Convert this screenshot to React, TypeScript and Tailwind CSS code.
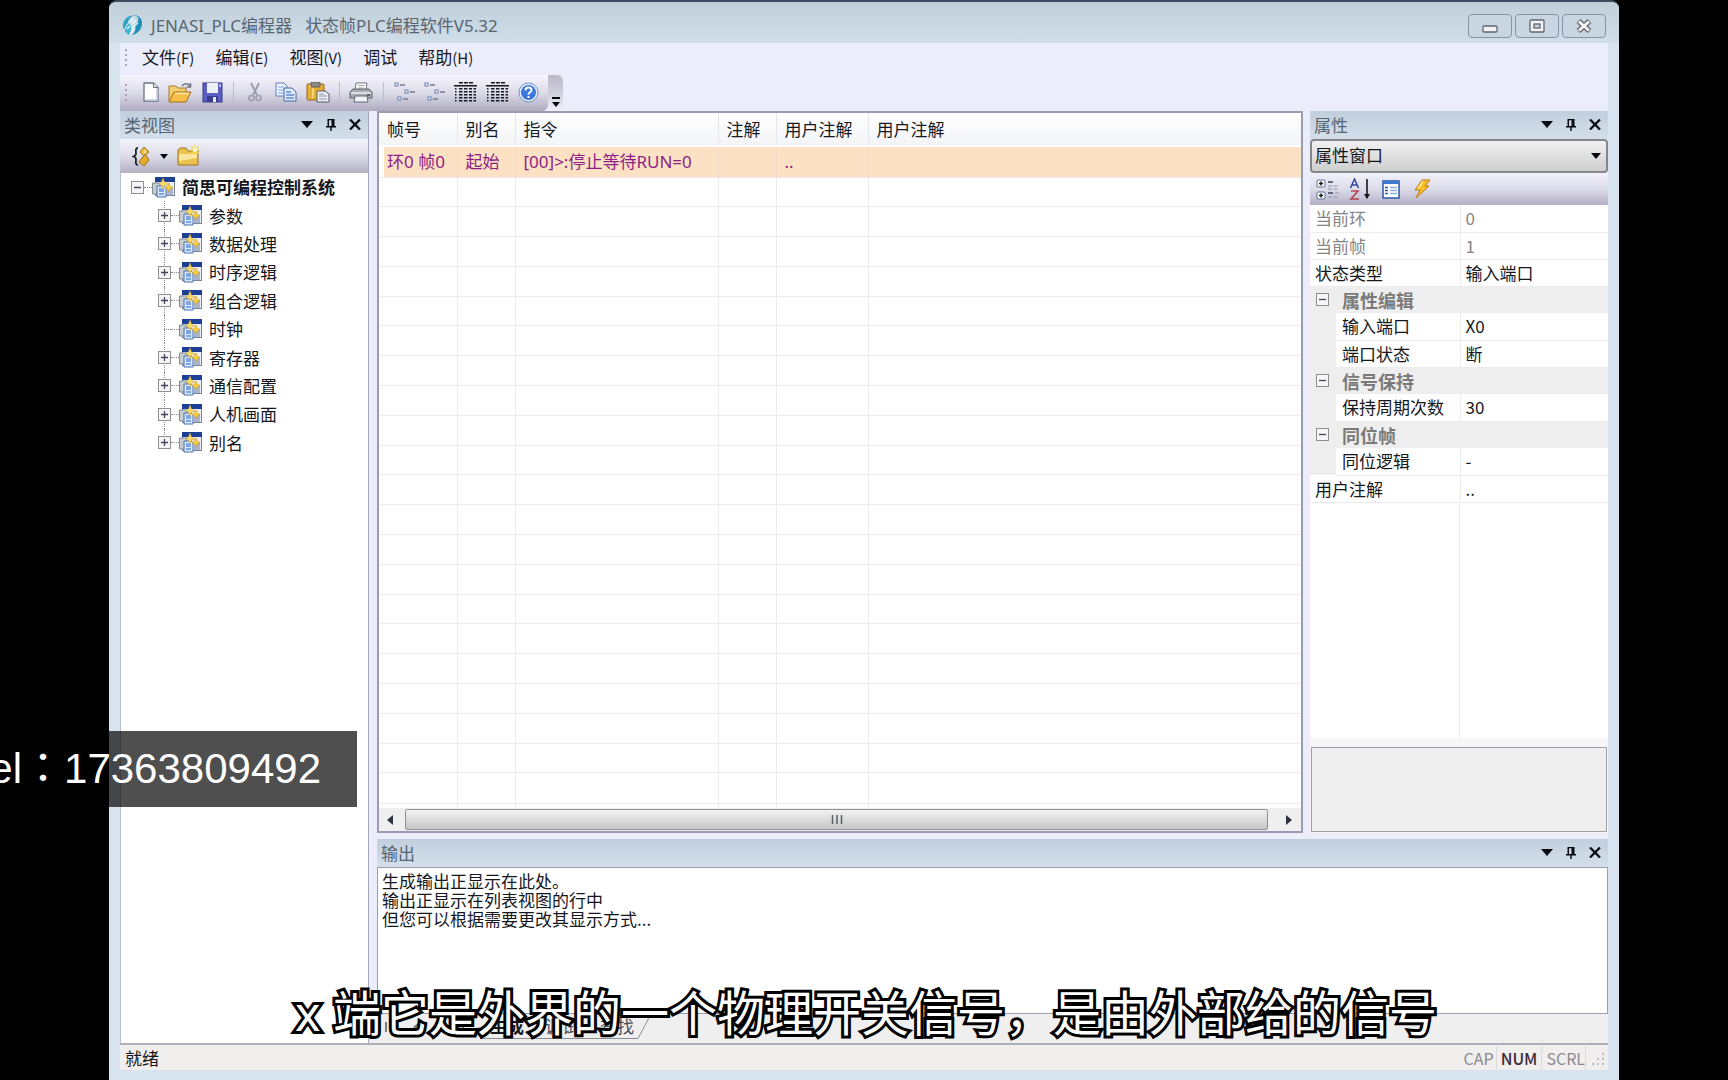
import React from "react";

const treeItems = [
  { label: "参数", expandable: true },
  { label: "数据处理", expandable: true },
  { label: "时序逻辑", expandable: true },
  { label: "组合逻辑", expandable: true },
  { label: "时钟", expandable: false },
  { label: "寄存器", expandable: true },
  { label: "通信配置", expandable: true },
  { label: "人机画面", expandable: true },
  { label: "别名", expandable: true },
];

type PropRow =
  | { kind: "group"; name: string }
  | { kind: "item" | "muted" | "child"; name: string; value: string };

const propRows: PropRow[] = [
  { kind: "muted", name: "当前环", value: "0" },
  { kind: "muted", name: "当前帧", value: "1" },
  { kind: "item", name: "状态类型", value: "输入端口" },
  { kind: "group", name: "属性编辑" },
  { kind: "child", name: "输入端口", value: "X0" },
  { kind: "child", name: "端口状态", value: "断" },
  { kind: "group", name: "信号保持" },
  { kind: "child", name: "保持周期次数", value: "30" },
  { kind: "group", name: "同位帧" },
  { kind: "child", name: "同位逻辑", value: "-" },
  { kind: "item", name: "用户注解", value: ".." },
];

const columns = ["帧号", "别名", "指令", "注解", "用户注解", "用户注解"];
const firstRow = ["环0 帧0", "起始", "[00]>:停止等待RUN=0", "", "..", ""];
const emptyRows = Array.from({ length: 21 }, (_, i) => i);

function Grip() {
  return (
    <svg width="4" height="18" viewBox="0 0 4 18" aria-hidden="true">
      {[1, 6, 11, 16].map((y) => (
        <rect key={y} x="1" y={y} width="2" height="2" fill="#a3a5ba" />
      ))}
    </svg>
  );
}

function AppLogo() {
  return (
    <svg width="22" height="22" viewBox="0 0 22 22" aria-hidden="true">
      <path d="M3 16C0 9 4 2 13 1C9 3 7 6 7 9C5 10 4 13 3 16Z" fill="#2aa5c8" />
      <path d="M13 1C18 1 21 5 21 9C21 15 17 20 11 21C15 17 15 14 14 11C17 9 18 6 17 3Z" fill="#238fb6" />
      <path d="M4 18C4 14 6 11 9 9C10 12 11 15 8 21Z" fill="#3fb4cf" />
      <path d="M8 9L13 4M10 11L15 6M12 13L17 9M6 15L9 12" stroke="#e9fbff" strokeWidth="1.400" />
      <path d="M9 20C12 18 13 15 12 12" fill="none" stroke="#e9fbff" strokeWidth="1.200" />
    </svg>
  );
}

function NewIcon() {
  return (
    <svg width="16" height="20" viewBox="0 0 16 20" aria-hidden="true">
      <path d="M1 1H10.500L15 5.500V19H1Z" fill="#fff" stroke="#6c7388" strokeWidth="1.300" />
      <path d="M10.500 1V5.500H15" fill="#dfe3ee" stroke="#6c7388" />
      <path d="M14 7V18H3" fill="none" stroke="#c9cede" strokeWidth="1.500" />
    </svg>
  );
}

function OpenIcon() {
  return (
    <svg width="25" height="21" viewBox="0 0 25 21" aria-hidden="true">
      <path d="M1 19V4H8L10 6H18V11" fill="#f3cf70" stroke="#a9792a" />
      <path d="M1 20L6 10H23L18 20Z" fill="#f7bf45" stroke="#a36f1d" />
      <path d="M7 11.500H21" stroke="#ffe9a6" strokeWidth="1.500" />
      <path d="M14 4C16 1 20 1 22 4M22.500 1V5H18.500" fill="none" stroke="#6f7480" strokeWidth="1.500" />
    </svg>
  );
}

function SaveIcon() {
  return (
    <svg width="21" height="21" viewBox="0 0 21 21" aria-hidden="true">
      <rect x="1" y="1" width="19" height="19" fill="#5c60c4" stroke="#34378a" />
      <rect x="5" y="1" width="11" height="10" fill="#eef0fb" />
      <rect x="17" y="2" width="2" height="3" fill="#b7baf0" />
      <rect x="5" y="14" width="11" height="6" fill="#3a3d91" />
      <rect x="11" y="15" width="3" height="5" fill="#e8eafa" />
    </svg>
  );
}

function CutIcon() {
  return (
    <svg width="14" height="20" viewBox="0 0 14 20" aria-hidden="true" fill="none" stroke="#9c9fb0">
      <path d="M3 1L9 13M11 1L5 13" strokeWidth="2" />
      <circle cx="3.500" cy="16" r="2.500" strokeWidth="1.600" />
      <circle cx="10.500" cy="16" r="2.500" strokeWidth="1.600" />
    </svg>
  );
}

function CopyIcon() {
  return (
    <svg width="22" height="20" viewBox="0 0 22 20" aria-hidden="true">
      <path d="M1 1H9L12 4V14H1Z" fill="#f2f6ff" stroke="#5f7fb8" />
      <path d="M3 5H9M3 8H10M3 11H10" stroke="#7ca0dd" />
      <path d="M9 6H17L21 10V19H9Z" fill="#e2ecff" stroke="#42649f" />
      <path d="M11 10H16M11 13H19M11 16H19" stroke="#5e8ad6" strokeWidth="1.300" />
    </svg>
  );
}

function PasteIcon() {
  return (
    <svg width="24" height="21" viewBox="0 0 24 21" aria-hidden="true">
      <rect x="1" y="2" width="17" height="16" rx="1" fill="#e5ae35" stroke="#94691b" />
      <path d="M3 4H7V16" fill="none" stroke="#fbe08e" strokeWidth="1.500" />
      <rect x="5" y="0" width="9" height="5" rx="1" fill="#8d8c88" stroke="#5b5a56" />
      <path d="M11 9H19L23 12V20H11Z" fill="#eef0f5" stroke="#565b6b" />
      <path d="M13 12H18M13 14H21M13 17H21" stroke="#8d94a8" />
    </svg>
  );
}

function PrintIcon() {
  return (
    <svg width="24" height="21" viewBox="0 0 24 21" aria-hidden="true">
      <path d="M6 9L7 1H18L17 9Z" fill="#fff" stroke="#73757d" />
      <path d="M9 3.500H16M9 6H15" stroke="#a5a7b0" />
      <path d="M1 10L4 7H20L23 10V16H1Z" fill="#a9abb3" stroke="#5c5e66" />
      <path d="M2 11H22" stroke="#eceef2" strokeWidth="1.500" />
      <path d="M6 14H18L19 20H5Z" fill="#f3f4f7" stroke="#66686f" />
      <rect x="18" y="12" width="3" height="2" fill="#5f6168" />
    </svg>
  );
}

function LadderIcon() {
  return (
    <svg width="21" height="20" viewBox="0 0 21 20" aria-hidden="true" fill="#fff" stroke="#6b7cae">
      <rect x="1" y="1" width="3" height="3" />
      <path d="M6 3H11M16 10H21M9 17H14" stroke="#777b90" strokeWidth="1.500" />
      <rect x="11" y="8" width="3" height="3" />
      <rect x="4" y="15" width="3" height="3" />
    </svg>
  );
}

function GridIcon() {
  return (
    <svg width="23" height="20" viewBox="0 0 23 20" aria-hidden="true" fill="#16181f">
      <rect x="5" y="0" width="4" height="1.500" />
      <rect x="10" y="0" width="4" height="1.500" />
      <rect x="15" y="0" width="4" height="1.500" />
      <rect x="0" y="3" width="23" height="1.500" />
      {[6, 9, 12, 15, 18].map((y) => (
        <g key={y}>
          <rect x="1" y={y} width="1.500" height="1.500" />
          <rect x="5" y={y} width="3.500" height="1.500" />
          <rect x="10" y={y} width="3.500" height="1.500" />
          <rect x="15" y={y} width="3" height="1.500" />
          <rect x="19.500" y={y} width="2.500" height="1.500" />
        </g>
      ))}
    </svg>
  );
}

function HelpIcon() {
  return (
    <svg width="21" height="21" viewBox="0 0 21 21" aria-hidden="true">
      <circle cx="10.500" cy="10.500" r="9.500" fill="#e5eefb" stroke="#6f93d2" />
      <circle cx="10.500" cy="10.500" r="7.500" fill="#3b78dc" />
      <path d="M7.500 8.500C7.500 4.500 13.500 4.500 13.500 8C13.500 10.500 10.500 10 10.500 12.500" fill="none" stroke="#fff" strokeWidth="2" />
      <rect x="9.500" y="14" width="2" height="2" fill="#fff" />
    </svg>
  );
}

function ClassIcon() {
  return (
    <svg width="23" height="21" viewBox="0 0 23 21" aria-hidden="true">
      <rect x="3.500" y="1" width="19" height="17.500" fill="#e9edf6" stroke="#7d8499" />
      <rect x="3" y="0" width="20" height="5" fill="#1d3f95" />
      <path d="M15 10H21V18H15Z" fill="#a9b4cf" />
      <path d="M0.500 6H8V17H0.500Z" fill="#c8cdd0" stroke="#858d94" />
      <path d="M5 9H12L14 11V20H5Z" fill="#d8e9ff" stroke="#4a6fae" />
      <path d="M7 12H12M7 14H12M7 17H12" stroke="#5f90dc" strokeWidth="1.300" />
      <path d="M11 1L12.500 5L16 7L12.500 8L11 12L9.500 8L7 7L9.500 5Z" fill="#f6d964" stroke="#d3a52e" strokeWidth="0.500" />
      <path d="M17 6L18 9L21 10.500L18 12L17 15L15.500 12L13 10.500L15.500 9Z" fill="#f9d03c" stroke="#c48f1a" strokeWidth="0.500" />
    </svg>
  );
}

function SortClassIcon() {
  return (
    <svg width="19" height="21" viewBox="0 0 19 21" aria-hidden="true">
      <path d="M6 2C3 2 4 5 4 7.500C4 9.500 3 10 1.500 10.500C3 11 4 11.500 4 13.500C4 16 3 19 6 19" fill="none" stroke="#20222b" strokeWidth="1.800" />
      <path d="M12 1L17 6L12 10L8 6Z" fill="#f2c23b" stroke="#9c6f17" />
      <path d="M13 8L17 14L12 20L7 16Z" fill="#e6ad2a" stroke="#9c6f17" />
      <path d="M12 4L14 6L12 8Z" fill="#fdf0bd" />
    </svg>
  );
}

function NewFolderIcon() {
  return (
    <svg width="24" height="22" viewBox="0 0 24 22" aria-hidden="true">
      <path d="M1 20V5L3 3H9L11 6H21V20Z" fill="#ecc24e" stroke="#9b7423" />
      <path d="M2 9H20V13L2 16Z" fill="#fae79d" />
      <path d="M18 0V10M13 5H23M14.500 1.500L21.500 8.500M21.500 1.500L14.500 8.500" stroke="#f6dc55" strokeWidth="1.300" />
      <circle cx="18" cy="5" r="2" fill="#fffbe0" />
    </svg>
  );
}

function DownTriangle() {
  return (
    <svg width="12" height="7" viewBox="0 0 12 7" aria-hidden="true">
      <path d="M0 0H12L6 7Z" fill="#05080f" />
    </svg>
  );
}

function SmallTriangle() {
  return (
    <svg width="8" height="5" viewBox="0 0 8 5" aria-hidden="true">
      <path d="M0 0H8L4 5Z" fill="#05080f" />
    </svg>
  );
}

function PinIcon() {
  return (
    <svg width="10" height="12" viewBox="0 0 10 12" aria-hidden="true" fill="#05080f">
      <path d="M1.500 0H8.500V7H10V8.500H5.700V12H4.300V8.500H0V7H1.500ZM3 1.300V7H5.500V1.300Z" fillRule="evenodd" />
    </svg>
  );
}

function CrossIcon() {
  return (
    <svg width="12" height="11" viewBox="0 0 12 11" aria-hidden="true">
      <path d="M1 0.500L11 10.500M11 0.500L1 10.500" stroke="#05080f" strokeWidth="2.200" />
    </svg>
  );
}

function Expander({ open }: { open: boolean }) {
  return (
    <svg width="13" height="13" viewBox="0 0 13 13" aria-hidden="true">
      <rect x="0.500" y="0.500" width="12" height="12" fill="#f6f6f6" stroke="#8f8f8f" />
      <path d={open ? "M3 6.500H10" : "M3 6.500H10M6.500 3V10"} stroke="#45485c" strokeWidth="1.300" />
    </svg>
  );
}

function PanelHeader({ title }: { title: string }) {
  return (
    <header className="flex h-7 shrink-0 items-center bg-linear-to-b from-[#c1cedb] to-[#d3e0ec] pl-1 pr-[7px] pb-px">
      <h2 className="flex-1 text-[17px] leading-6 text-[#566573]">{title}</h2>
      <div className="flex items-center gap-[13px]">
        <button type="button" aria-label="窗口位置"><DownTriangle /></button>
        <button type="button" aria-label="自动隐藏"><PinIcon /></button>
        <button type="button" aria-label="关闭"><CrossIcon /></button>
      </div>
    </header>
  );
}

function TitleBar() {
  return (
    <div className="flex h-[41px] shrink-0 items-center bg-linear-to-b from-[#c1cfdb] to-[#cfdee8] pl-3 pr-[13px]">
      <span className="pt-1"><AppLogo /></span>
      <h1 className="flex flex-1 gap-[13px] pl-2 pt-[7px] font-['Noto_Sans','Noto_Sans_CJK_SC',sans-serif] text-[17px] leading-6 text-[#5a6570]">
        <span>JENASI_PLC编程器</span>
        <span>状态帧PLC编程软件V5.32</span>
      </h1>
      <div className="flex gap-[3px] pt-1.5">
        <button type="button" aria-label="最小化" className="grid h-6 w-11 place-items-center rounded-sm border border-[#8793a3] bg-[#c9d6e1]">
          <svg width="16" height="16" viewBox="0 0 16 16"><rect x="1" y="8" width="14" height="6" rx="1" fill="#f4f4f4" stroke="#5f6670" strokeWidth="1.300" /></svg>
        </button>
        <button type="button" aria-label="还原" className="grid h-6 w-11 place-items-center rounded-sm border border-[#8793a3] bg-[#c9d6e1]">
          <svg width="16" height="14" viewBox="0 0 16 14"><rect x="1" y="1" width="14" height="12" rx="1" fill="#f4f4f4" stroke="#5f6670" strokeWidth="1.300" /><rect x="5" y="5" width="6" height="4" fill="#cbd5df" stroke="#5f6670" strokeWidth="1.300" /></svg>
        </button>
        <button type="button" aria-label="关闭" className="grid h-6 w-11 place-items-center rounded-sm border border-[#8793a3] bg-[#c9d6e1]">
          <svg width="16" height="14" viewBox="0 0 16 14"><path d="M2.500 2L13.500 12M13.500 2L2.500 12" stroke="#5f6670" strokeWidth="5.500" /><path d="M3 2.500L13 11.500M13 2.500L3 11.500" stroke="#f6f6f6" strokeWidth="3" /></svg>
        </button>
      </div>
    </div>
  );
}

function MenuBar() {
  const menus = [
    ["文件", "(F)"],
    ["编辑", "(E)"],
    ["视图", "(V)"],
    ["调试", ""],
    ["帮助", "(H)"],
  ];
  return (
    <nav className="flex h-8 shrink-0 items-center gap-[14px] pb-1 pl-1">
      <Grip />
      <div className="flex items-center gap-[21px]">
        {menus.map(([name, key]) => (
          <button type="button" key={name} className="text-[17px] leading-6 text-[#16181f]">
            {name}
            {key && <span className="text-[15px]">{key}</span>}
          </button>
        ))}
      </div>
    </nav>
  );
}

function ToolBar() {
  return (
    <div className="flex h-9 shrink-0">
      <div className="flex items-center rounded-br-md bg-linear-to-b from-[#f6f6fd] via-[#dcdbe8] to-[#aeabbf] pr-[9px] pb-0.5 pl-1">
        <Grip />
        <div className="flex items-center gap-[9px] pl-[15px]">
          <button type="button" aria-label="新建"><NewIcon /></button>
          <button type="button" aria-label="打开"><OpenIcon /></button>
          <button type="button" aria-label="保存"><SaveIcon /></button>
          <span className="mx-px h-5 w-px bg-[#b9bccd]" />
          <button type="button" aria-label="剪切" className="px-1"><CutIcon /></button>
          <button type="button" aria-label="复制"><CopyIcon /></button>
          <button type="button" aria-label="粘贴"><PasteIcon /></button>
          <span className="h-5 w-px bg-[#b9bccd]" />
          <button type="button" aria-label="打印"><PrintIcon /></button>
          <span className="mx-px h-5 w-px bg-[#b9bccd]" />
          <button type="button" aria-label="插入环"><LadderIcon /></button>
          <button type="button" aria-label="插入帧"><LadderIcon /></button>
          <button type="button" aria-label="下载"><GridIcon /></button>
          <button type="button" aria-label="上传"><GridIcon /></button>
          <button type="button" aria-label="帮助"><HelpIcon /></button>
        </div>
      </div>
      <button type="button" aria-label="工具栏选项" className="flex w-[15px] flex-col items-center justify-end gap-[3px] rounded-r-md bg-linear-to-b from-[#bcbac9] via-[#cfcedb] to-[#f1f1fa] pb-1">
        <span className="h-0.5 w-2 bg-[#05080f]" />
        <SmallTriangle />
      </button>
    </div>
  );
}

function ClassView() {
  return (
    <section className="flex w-[249px] shrink-0 flex-col border-r border-[#a5a8bb]">
      <PanelHeader title="类视图" />
      <div className="flex h-[34px] shrink-0 items-center bg-linear-to-b from-[#f3f3fb] via-[#dddce8] to-[#b3b0c3] pl-3">
        <button type="button" aria-label="排序"><SortClassIcon /></button>
        <button type="button" aria-label="排序选项" className="px-[9px]"><SmallTriangle /></button>
        <button type="button" aria-label="新建文件夹"><NewFolderIcon /></button>
      </div>
      <div className="flex-1 border-l border-[#b6bfca] bg-white">
        <ul className="grid h-[284px] grid-rows-10 text-[17px] leading-6 text-[#15171c]">
          <li className="flex items-center pl-[10px]">
            <button type="button" aria-label="折叠"><Expander open /></button>
            <span className="w-2 border-t border-dotted border-[#8a8a8a]" />
            <ClassIcon />
            <span className="pl-[7px] font-bold">简思可编程控制系统</span>
          </li>
          {treeItems.map((item, i) => (
            <li key={item.label} className="relative flex items-center pl-[37px]">
              <span className={i === treeItems.length - 1 ? "absolute left-[43px] top-0 h-1/2 border-l border-dotted border-[#8a8a8a]" : "absolute left-[43px] top-0 h-full border-l border-dotted border-[#8a8a8a]"} />
              {item.expandable ? (
                <button type="button" aria-label="展开" className="relative"><Expander open={false} /></button>
              ) : (
                <span className="ml-[6px] w-[7px] border-t border-dotted border-[#8a8a8a]" />
              )}
              <span className="w-2 border-t border-dotted border-[#8a8a8a]" />
              <ClassIcon />
              <span className="pl-[7px]">{item.label}</span>
            </li>
          ))}
        </ul>
      </div>
    </section>
  );
}

function FrameTable() {
  return (
    <section className="flex min-w-0 flex-1 flex-col border-2 border-[#9a9db2] bg-white">
      <div className="grid min-h-0 flex-1">
        <table className="h-full w-full table-fixed border-collapse text-[17px] leading-6">
          <colgroup>
            <col className="w-[78px]" />
            <col className="w-[58px]" />
            <col className="w-[203px]" />
            <col className="w-[58px]" />
            <col className="w-[92px]" />
            <col />
          </colgroup>
          <thead>
            <tr className="h-[33px] border-b border-[#d9dade] bg-linear-to-b from-white to-[#f3f4f6]">
              {columns.map((c, i) => (
                <th key={i} scope="col" className="border-r border-[#e6e7ea] p-0 pl-2 text-left font-normal text-[#16181f] last:border-r-0">{c}</th>
              ))}
            </tr>
          </thead>
          <tbody className="font-['Noto_Sans','Noto_Sans_CJK_SC',sans-serif]">
            <tr className="h-[31px] border-t-2 border-b border-t-white border-b-[#ececec] bg-[#fde1c4]">
              {firstRow.map((c, i) => (
                <td key={i} className="border-r border-[#f3dcc8] p-0 pl-2 whitespace-nowrap text-[#8b1f86] first:bg-linear-to-r first:from-white first:from-[5px] first:to-[#fde1c4] first:to-[5px] last:border-r-0">{c}</td>
              ))}
            </tr>
            {emptyRows.map((r) => (
              <tr key={r} className="border-b border-[#ececec]">
                {columns.map((_, i) => (
                  <td key={i} className="border-r border-[#ececec] p-0 last:border-r-0" />
                ))}
              </tr>
            ))}
            <tr className="h-[5px]">
              {columns.map((_, i) => (
                <td key={i} className="border-r border-[#ececec] p-0 last:border-r-0" />
              ))}
            </tr>
          </tbody>
        </table>
      </div>
      <div className="flex h-[23px] shrink-0 items-center bg-[#efefef]">
        <button type="button" aria-label="向左滚动" className="grid w-[26px] place-items-center pr-1">
          <svg width="6" height="10" viewBox="0 0 6 10"><path d="M6 0V10L0 5Z" fill="#30333c" /></svg>
        </button>
        <div className="grid h-[21px] flex-1 place-items-center rounded-xs border border-[#8f9196] bg-linear-to-b from-[#f3f3f3] via-[#dcdcdc] to-[#c6c6c8]">
          <svg width="12" height="9" viewBox="0 0 12 9"><path d="M1.500 0V9M6 0V9M10.500 0V9" stroke="#5c5f66" strokeWidth="1.500" /></svg>
        </div>
        <button type="button" aria-label="向右滚动" className="grid w-[33px] place-items-center pl-2">
          <svg width="6" height="10" viewBox="0 0 6 10"><path d="M0 0V10L6 5Z" fill="#30333c" /></svg>
        </button>
      </div>
    </section>
  );
}

function PropertyToolbar() {
  return (
    <div className="flex h-8 shrink-0 items-center gap-[9px] bg-linear-to-b from-[#f1f1fa] via-[#dddcea] to-[#b3b0c5] pl-[6px]">
      <button type="button" aria-label="按分类">
        <svg width="24" height="21" viewBox="0 0 24 21">
          {[1, 13].map((y) => (
            <g key={y}>
              <rect x="1" y={y} width="8" height="7" rx="1" fill="#fff" stroke="#5f6f9c" />
              <path d={`M3 ${y + 3.5}H7M5 ${y + 1.5}V${y + 5.5}`} stroke="#15171c" strokeWidth="1.500" />
            </g>
          ))}
          <path d="M12 3H17M12 14H17" stroke="#3f434f" strokeWidth="1.500" />
          <path d="M12 7H23M12 10H23M12 18H23M19 14H23" stroke="#9095a8" strokeDasharray="4 1.500" />
        </svg>
      </button>
      <button type="button" aria-label="按字母">
        <svg width="22" height="23" viewBox="0 0 22 23" fill="none">
          <path d="M1.500 10L5.500 1L9.500 10M3 7H8" stroke="#32479c" strokeWidth="1.500" />
          <path d="M2 13H9L2 21H10" stroke="#b04452" strokeWidth="1.600" />
          <path d="M18 1V20" stroke="#15171c" strokeWidth="1.600" />
          <path d="M15 16H21L18 21Z" fill="#15171c" />
        </svg>
      </button>
      <button type="button" aria-label="属性页" className="pl-0.5">
        <svg width="18" height="19" viewBox="0 0 18 19">
          <rect x="1" y="1" width="16" height="17" fill="#fff" stroke="#2857a5" strokeWidth="1.500" />
          <rect x="1" y="1" width="16" height="3" fill="#3d78cf" />
          <path d="M3 7.500H6M3 10.500H6M3 13.500H6" stroke="#2857a5" strokeWidth="1.500" />
          <path d="M8 7.500H15M8 10.500H15M8 13.500H15" stroke="#8cb0e6" strokeWidth="1.500" />
        </svg>
      </button>
      <button type="button" aria-label="事件" className="pl-1">
        <svg width="18" height="20" viewBox="0 0 18 20">
          <path d="M9 1H17L12 7H16L3 19L7 11H2Z" fill="#f7bd22" stroke="#c27912" />
          <path d="M10 2L5 10" stroke="#ffeb9a" strokeWidth="1.500" />
        </svg>
      </button>
    </div>
  );
}

function PropertyPanel() {
  return (
    <section className="flex w-[298px] shrink-0 flex-col">
      <PanelHeader title="属性" />
      <div className="relative shrink-0">
        <select aria-label="属性对象" className="block h-[34px] w-full appearance-none rounded-sm border-2 border-[#85878d] bg-linear-to-b from-[#f1f1f1] via-[#e0e0e0] to-[#cfcfcf] pb-0.5 pl-[3px] text-[17px] leading-6 text-[#15171c]">
          <option>属性窗口</option>
        </select>
        <span className="pointer-events-none absolute inset-y-0 right-[7px] flex items-center">
          <svg width="10" height="6" viewBox="0 0 10 6"><path d="M0 0H10L5 6Z" fill="#05080f" /></svg>
        </span>
      </div>
      <PropertyToolbar />
      <div className="flex flex-1 flex-col bg-white">
        <table className="w-full table-fixed border-collapse text-[17px] leading-6">
          <colgroup>
            <col className="w-[26px]" />
            <col className="w-[124px]" />
            <col />
          </colgroup>
          <tbody>
            {propRows.map((row) => {
              if (row.kind === "group") {
                return (
                  <tr key={row.name} className="h-[27px] bg-[#eeeeee]">
                    <td className="p-0 pl-[6px]"><button type="button" aria-label="折叠" className="block"><Expander open /></button></td>
                    <th colSpan={2} scope="colgroup" className="p-0 pl-[6px] text-left text-[18px] leading-6 font-bold text-[#7a7a7a]">{row.name}</th>
                  </tr>
                );
              }
              if (row.kind === "child") {
                return (
                  <tr key={row.name} className="h-[27px] text-[#15171c]">
                    <td className="bg-[#eeeeee] p-0" />
                    <th scope="row" className="border-r border-b border-[#ececec] p-0 pl-[6px] text-left font-normal whitespace-nowrap">{row.name}</th>
                    <td className="border-b border-[#ececec] p-0 pl-[5px]">{row.value}</td>
                  </tr>
                );
              }
              return (
                <tr key={row.name} className={row.kind === "muted" ? "h-[27px] text-[#858585]" : "h-[27px] text-[#15171c]"}>
                  <th colSpan={2} scope="row" className="border-r border-b border-[#ececec] p-0 pl-[5px] text-left font-normal">{row.name}</th>
                  <td className="border-b border-[#ececec] p-0 pl-[5px]">{row.value}</td>
                </tr>
              );
            })}
          </tbody>
        </table>
        <div className="w-[150px] flex-1 border-r border-[#ececec]" />
      </div>
      <div className="shrink-0 bg-[#f6f6f8] px-px pt-[9px] pb-px">
        <div className="h-[85px] border border-[#a0a0a2] bg-[#eeeeee]" />
      </div>
    </section>
  );
}

function OutputPanel() {
  return (
    <section className="flex h-[204px] shrink-0 flex-col">
      <PanelHeader title="输出" />
      <div className="flex-1 border border-[#9a9db2] bg-white pl-1 pt-[3px] text-[17px] leading-[19px] text-[#15171c]">
        <p>生成输出正显示在此处。</p>
        <p>输出正显示在列表视图的行中</p>
        <p>但您可以根据需要更改其显示方式...</p>
      </div>
      <div className="flex h-[29px] shrink-0 items-start bg-[#efefef] text-[17px] leading-6 text-[#4c4e55]">
        <div className="flex w-[103px] items-center pl-2 pt-2">
          <svg width="80" height="10" viewBox="0 0 80 10" fill="#7b7d84"><path d="M0 0H2V10H0ZM10 0V10L4 5ZM34 0V10L28 5ZM50 0V10L56 5ZM70 0V10L76 5ZM77 0H79V10H77Z" /></svg>
        </div>
        <button type="button" className="w-[55px] border-b border-[#8b8d94] pl-[10px] text-left font-bold text-[#15171c]">生成</button>
        <button type="button" className="w-[55px] border-b border-[#8b8d94] pl-[10px] text-left">调试</button>
        <button type="button" className="w-[48px] border-b border-[#8b8d94] pl-[10px] text-left">查找</button>
        <svg width="14" height="25" viewBox="0 0 14 25"><path d="M0 24.500L13 0" stroke="#8b8d94" fill="none" /></svg>
      </div>
    </section>
  );
}

function StatusBar() {
  return (
    <footer className="flex h-[27px] shrink-0 items-center border-t-2 border-[#aeb0b6] bg-[#f1eeee] pl-[5px] text-[17px] leading-6 text-[#15171c]">
      <span className="flex-1">就绪</span>
      <span className="border-r border-[#dcdade] pr-[2px] text-[16px] text-[#8a8a8e]">CAP</span>
      <span className="border-r border-[#dcdade] px-1 text-[16px] font-medium text-[#3b2c38]">NUM</span>
      <span className="border-r border-[#dcdade] pl-1 text-[16px] text-[#8a8a8e]">SCRL</span>
      <svg width="22" height="18" viewBox="0 0 22 18" fill="#bcbcc2">
        <path d="M16 4H18V6H16ZM16 9H18V11H16ZM11 9H13V11H11ZM16 14H18V16H16ZM11 14H13V16H11ZM6 14H8V16H6Z" />
      </svg>
    </footer>
  );
}

export default function App() {
  return (
    <div className="relative flex h-screen overflow-hidden bg-black px-[109px] font-['Noto_Sans_CJK_SC',sans-serif]">
      <main className="flex min-w-0 flex-1 flex-col overflow-hidden rounded-t-lg border-t-2 border-[#3d4b60] bg-[#d7e3ee]">
        <TitleBar />
        <div className="mx-[11px] mb-[10px] flex min-h-0 flex-1 flex-col bg-[#ecedfa]">
          <MenuBar />
          <ToolBar />
          <div className="flex min-h-0 flex-1">
            <ClassView />
            <div className="flex min-w-0 flex-1 flex-col gap-[6px] pl-2">
              <div className="flex min-h-0 flex-1 gap-[7px]">
                <FrameTable />
                <PropertyPanel />
              </div>
              <OutputPanel />
            </div>
          </div>
          <StatusBar />
        </div>
      </main>
      <div className="absolute top-[731px] left-0 flex h-[76px] w-[357px] items-center justify-end overflow-hidden bg-black/69 pr-9 font-['Liberation_Sans','Noto_Sans_CJK_TC',sans-serif] text-[42px] leading-none whitespace-nowrap text-white">
        Tel：17363809492
      </div>
      <p className="absolute inset-x-0 bottom-8 pl-1 text-center font-['Noto_Sans','Noto_Sans_CJK_SC',sans-serif] text-[48px] leading-[70px] text-white [-webkit-text-stroke:6px_black] [paint-order:stroke_fill]">
        x 端它是外界的一个物理开关信号，是由外部给的信号
      </p>
    </div>
  );
}
